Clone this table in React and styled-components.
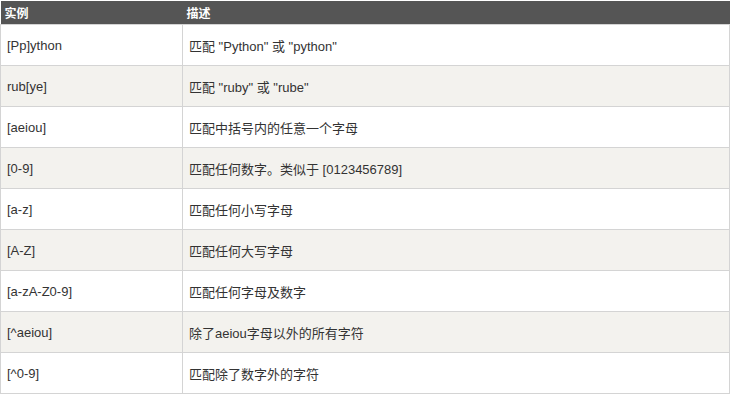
import React from "react";
import styled, { createGlobalStyle } from "styled-components";

const rows = [
  ["[Pp]ython", "匹配 \"Python\" 或 \"python\""],
  ["rub[ye]", "匹配 \"ruby\" 或 \"rube\""],
  ["[aeiou]", "匹配中括号内的任意一个字母"],
  ["[0-9]", "匹配任何数字。类似于 [0123456789]"],
  ["[a-z]", "匹配任何小写字母"],
  ["[A-Z]", "匹配任何大写字母"],
  ["[a-zA-Z0-9]", "匹配任何字母及数字"],
  ["[^aeiou]", "除了aeiou字母以外的所有字符"],
  ["[^0-9]", "匹配除了数字外的字符"]
];

const Global = createGlobalStyle`
  body {
    margin: 0;
    background: #ffffff;
    font-family: "Liberation Sans", Arial, "Noto Sans CJK SC", sans-serif;
  }
`;

const Table = styled.table`
  width: 730px;
  margin-top: 1px;
  border-collapse: collapse;
  table-layout: fixed;
  font-size: 12px;
  color: #333333;
`;

const HeadCell = styled.th`
  height: 23px;
  padding: 0 4px;
  background: #555555;
  color: #ffffff;
  font-weight: bold;
  text-align: left;
  width: ${props => props.w || "auto"};
`;

const Row = styled.tr`
  background: ${props => (props.odd ? "#f3f2ee" : "#ffffff")};
`;

const Cell = styled.td`
  height: 40px;
  padding: 0 6px;
  border: 1px solid #d4d4d4;
  font-size: 13px;
  vertical-align: middle;
`;

export default function App() {
  return (
    <>
      <Global />
      <Table>
        <thead>
          <tr>
            <HeadCell w="174px">实例</HeadCell>
            <HeadCell>描述</HeadCell>
          </tr>
        </thead>
        <tbody>
          {rows.map(([example, desc], i) => (
            <Row key={example} odd={i % 2 === 1}>
              <Cell>{example}</Cell>
              <Cell>{desc}</Cell>
            </Row>
          ))}
        </tbody>
      </Table>
    </>
  );
}
